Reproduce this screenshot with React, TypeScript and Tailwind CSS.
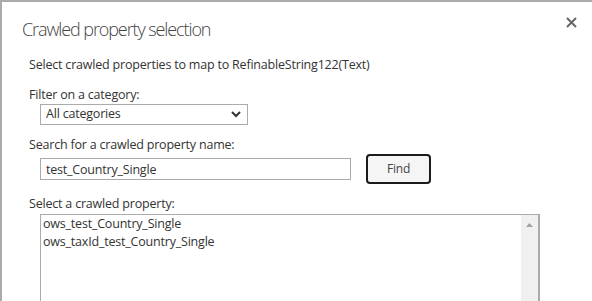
import { useState } from 'react'

const font = { fontFamily: '"Open Sans", "Noto Sans", "Liberation Sans", sans-serif' }

export default function App() {
  const [query, setQuery] = useState('test_Country_Single')
  const items = ['ows_test_Country_Single', 'ows_taxId_test_Country_Single']

  return (
    <div className="h-[301px] w-[592px] overflow-hidden bg-white" style={font}>
      <div className="relative h-full border-l-2 border-t-2 border-[#ababab] bg-white">
        <button className="absolute right-[15px] top-[15px] block text-[#666]" aria-label="Close">
          <svg width="11" height="11" viewBox="0 0 11 11" className="block">
            <path d="M1 1 L10 10 M10 1 L1 10" stroke="currentColor" strokeWidth="2" />
          </svg>
        </button>

        <h1 className="pl-[20px] pt-[14px] text-[18px] font-light leading-[26px] tracking-[-1.1px] text-[#444]">
          Crawled property selection
        </h1>

        <div className="pl-[27px] pt-[14px] text-[12.5px] tracking-[-0.2px] text-[#333]">
          <p className="leading-[18px]">Select crawled properties to map to RefinableString122(Text)</p>

          <p className="mt-[12px] leading-[18px]">Filter on a category:</p>
          <div className="ml-[11px] flex h-[21px] w-[208px] items-center justify-between border border-[#ababab] pl-[5px] pr-[6px]">
            <span>All categories</span>
            <svg width="10" height="7" viewBox="0 0 10 7">
              <path d="M1 1 L5 5 L9 1" stroke="#333" strokeWidth="2" fill="none" />
            </svg>
          </div>

          <p className="mt-[11px] leading-[18px]">Search for a crawled property name:</p>
          <div className="flex items-center">
            <input
              value={query}
              onChange={(e) => setQuery(e.target.value)}
              className="ml-[11px] h-[22px] w-[311px] border border-[#ababab] px-[5px] text-[12.5px] tracking-[-0.2px] text-[#333] outline-none"
              style={font}
            />
            <button className="ml-[15px] h-[30px] w-[65px] rounded-[4px] border-2 border-[#1b1b1b] bg-[#f5f5f5] text-[12px] tracking-[-0.2px] text-[#444]">
              Find
            </button>
          </div>

          <p className="mt-[11px] leading-[18px]">Select a crawled property:</p>
          <div className="ml-[11px] mt-[1px] flex h-[100px] w-[500px] border border-r-2 border-[#ababab]">
            <ul className="flex-1 pl-[2px] leading-[18px]">
              {items.map((item) => (
                <li key={item}>{item}</li>
              ))}
            </ul>
            <div className="flex w-[17px] justify-center bg-[#f0f0f0] pt-[8px]">
              <svg width="7" height="4" viewBox="0 0 7 4">
                <path d="M0 4 L3.5 0 L7 4 Z" fill="#a3a3a3" />
              </svg>
            </div>
          </div>
        </div>
      </div>
    </div>
  )
}
